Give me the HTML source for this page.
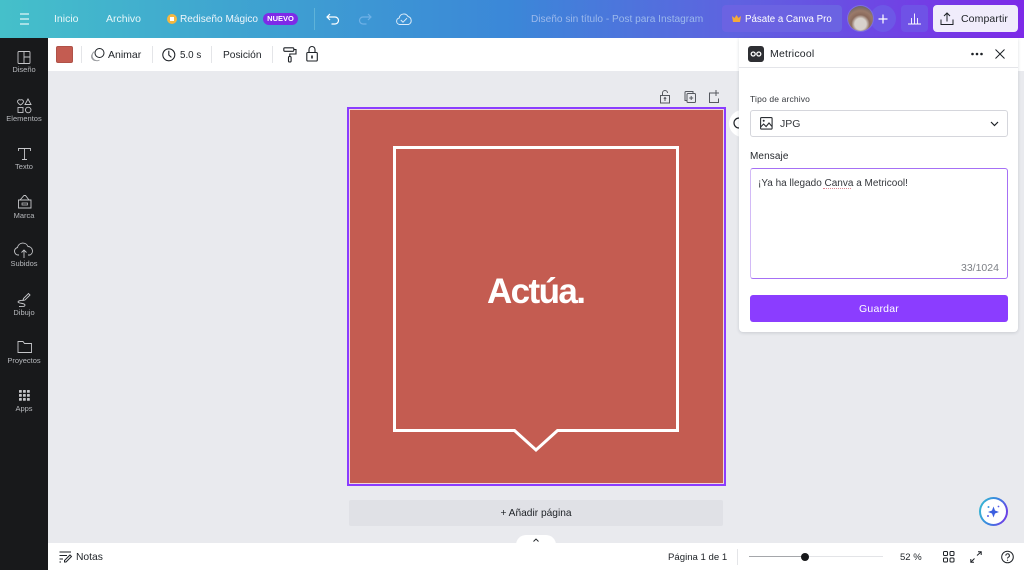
<!DOCTYPE html>
<html lang="es"><head><meta charset="utf-8"><title>Canva</title>
<style>
html,body{margin:0;padding:0}
body{position:relative;width:1024px;height:570px;overflow:hidden;background:#e9eaee;font-family:"Liberation Sans",sans-serif;color:#1d2126}
.a{position:absolute}
.t{position:absolute;white-space:nowrap;line-height:14px}
svg{position:absolute;overflow:visible;fill:none}
.sl{position:absolute;left:0;width:48px;text-align:center;font-size:7.5px;line-height:10px;color:#b6b8bc}
.sep{position:absolute;width:1px;background:#e4e5e8}
</style></head><body>

<!-- top bar -->
<div class="a" style="left:0;top:0;width:1024px;height:38px;background:linear-gradient(90deg,#45c0ca 0%,#3fa5d0 22%,#3b87d8 50%,#5f62e0 72%,#7d2ae8 100%)"></div>
<svg style="left:0;top:0" width="440" height="38" stroke="#dff5f7" stroke-width="1.2">
<path d="M20 14H29M20 19H29M20 24H29"/>
<path stroke="#fff" d="M330 14l-3 3 3 3M327 17h8a3.500 3.500 0 0 1 0 7h-3.500"/>
<path stroke="#6fb1e6" d="M368 14l3 3-3 3M371 17h-8a3.500 3.500 0 0 0 0 7h3.500"/>
<path stroke="#dcecf9" d="M399.500 24.500a3.300 3.300 0 0 1-.3-6.500 4.700 4.700 0 0 1 8.800-1.500 4.200 4.200 0 0 1 .5 8zM400.800 20l2.200 2.200 4-4" stroke-width="1"/>
</svg>
<div class="t" style="left:54px;top:12px;font-size:10.500px;color:#e6f7f9">Inicio</div>
<div class="t" style="left:106px;top:12px;font-size:10.500px;color:#e6f7f9">Archivo</div>
<div class="a" style="left:167px;top:14px;width:10px;height:10px;border-radius:50%;background:#f4b740"></div>
<div class="a" style="left:170px;top:17px;width:4px;height:4px;background:#fff"></div>
<div class="t" style="left:180px;top:13px;font-size:10.100px;color:#eef6fb">Rediseño Mágico</div>
<div class="a" style="left:263px;top:13px;width:35px;height:12px;border-radius:6px;background:#7d2ae8;color:#fff;font-size:7.500px;line-height:12px;text-align:center;font-weight:bold">NUEVO</div>
<div class="a" style="left:314px;top:8px;width:1px;height:22px;background:#5fb3d9"></div>
<div class="t" style="left:531px;top:13px;font-size:10.150px;color:#9cb9ec">Diseño sin título - Post para Instagram</div>
<div class="a" style="left:722px;top:5px;width:120px;height:27px;border-radius:4px;background:#6b63e2"></div>
<svg style="left:732px;top:15px" width="10" height="8"><path d="M0 1l2.500 2L4.500 0l2 3L9 1 8 7H1z" fill="#f5a93a"/></svg>
<div class="t" style="left:745px;top:13px;font-size:9.700px;color:#fff">Pásate a Canva Pro</div>
<div class="a" style="left:870px;top:5px;width:26px;height:27px;border-radius:50%;background:#6d57e6"></div>
<svg style="left:877px;top:13px" width="12" height="12" stroke="#fff" stroke-width="1.2"><path d="M6 1.500v9M1.500 6h9"/></svg>
<div class="a" style="left:848px;top:6px;width:25px;height:25px;border-radius:50%;background:radial-gradient(circle at 50% 72%,#d8d2cc 0 26%,#8a6a5c 42%,#9a7a6a 60%,#4d5662 100%);box-shadow:0 0 0 1px #7d6fe0"></div>
<div class="a" style="left:901px;top:5px;width:27px;height:27px;border-radius:4px;background:#6f52e6"></div>
<svg style="left:907px;top:12px" width="15" height="13" stroke="#fff" stroke-width=".9"><path d="M1 12H14M4.500 12V6M7.500 12V1.500M10.500 12V6"/></svg>
<div class="a" style="left:933px;top:5px;width:85px;height:27px;border-radius:4px;background:#f0ecfb"></div>
<svg style="left:940px;top:12px" width="14" height="14" stroke="#1d2126" stroke-width="1"><path d="M7 1v8.500M4 4l3-3 3 3M1 7.500V12.500H13V7.500"/></svg>
<div class="t" style="left:961px;top:12px;font-size:10.500px;color:#1d2126;letter-spacing:.1px">Compartir</div>

<!-- toolbar -->
<div class="a" style="left:48px;top:38px;width:976px;height:33px;background:#fff"></div>
<div class="a" style="left:0;top:38px;width:48px;height:532px;background:#18191b"></div>
<div class="a" style="left:56px;top:46px;width:17px;height:17px;border-radius:2px;background:#c45c51;box-shadow:inset 0 0 0 1px rgba(0,0,0,.1)"></div>
<div class="sep" style="left:81px;top:46px;height:17px"></div>
<svg style="left:90px;top:47px" width="16" height="16" stroke="#1d2126" stroke-width="1"><circle cx="9.500" cy="6" r="4.500"/><path stroke="#9a9ca0" d="M4.500 4.500a4.500 4.500 0 0 0 5 8.500M2.500 7a4 4 0 0 0 3.500 6.500"/></svg>
<div class="t" style="left:108px;top:48px;font-size:10.500px">Animar</div>
<div class="sep" style="left:152px;top:46px;height:17px"></div>
<svg style="left:162px;top:48px" width="14" height="14" stroke="#1d2126" stroke-width="1.1"><circle cx="6.800" cy="6.800" r="6"/><path d="M6.800 2.800V7l2.600 2.400"/></svg>
<div class="t" style="left:180px;top:49px;font-size:9.800px">5.0 s</div>
<div class="sep" style="left:211px;top:46px;height:17px"></div>
<div class="t" style="left:223px;top:49px;font-size:10.200px">Posición</div>
<div class="sep" style="left:272px;top:46px;height:17px"></div>
<svg style="left:283px;top:47px" width="14" height="16" stroke="#1d2126" stroke-width="1.1"><rect x=".8" y=".8" width="10" height="3.500" rx="1"/><path d="M11 2.500h2V7H6.800v2.500"/><rect x="5.500" y="9.500" width="2.600" height="5.500" rx="1"/></svg>
<svg style="left:306px;top:46px" width="12" height="16" stroke="#1d2126" stroke-width="1.1"><rect x=".8" y="6.500" width="10.500" height="8.500" rx="1"/><path d="M3 6.500V3.500a3 3 0 0 1 6 0v3"/><rect x="5.200" y="9.500" width="1.600" height="3" fill="#1d2126" stroke="none"/></svg>

<!-- sidebar -->
<svg style="left:0;top:40px" width="48" height="390" stroke="#c5c6c9" stroke-width=".9">
<rect x="18" y="11.500" width="12" height="12" rx="1"/><path d="M24 11.500v12M24 17h6"/>
<path d="M17.500 61.500a2 2 0 0 1 3-1.500 2 2 0 0 1 3 1.500c0 1.500-3 3.500-3 3.500s-3-2-3-3.500zM28 59l3 5.500h-6z"/><rect x="18" y="67.500" width="5" height="5"/><circle cx="28.200" cy="70" r="2.800"/>
<path d="M18.500 111v-2.500h12v2.500M24.500 108.500v11M22 119.500h5"/>
<path d="M18.500 160h12.500v8H18.500zM20 160l4-4.500h1.500l3.500 4.500"/><path d="M22 163h5.500v2H22z" stroke-width=".7"/>
<path d="M19 216h-1a3.800 3.800 0 0 1-.5-7.500 5.500 5.500 0 0 1 10.500-1 4.500 4.500 0 0 1 2 8.500h-2M24 219v-8M21.500 213.500L24 211l2.500 2.500" transform="translate(0 -1)"/>
<path d="M30 255l-5 5-2 .5.500-2 5-5zM24 260c-3 .5-6 .500-6 2s7 1 7 3-3 1.500-6 1.500"/>
<path d="M18 301.500h5l1.500 2h7v9H18z"/>
<g fill="#c5c6c9" stroke="none"><rect x="19" y="350" width="2.800" height="2.800" rx=".6"/><rect x="23" y="350" width="2.800" height="2.800" rx=".6"/><rect x="27" y="350" width="2.800" height="2.800" rx=".6"/><rect x="19" y="354" width="2.800" height="2.800" rx=".6"/><rect x="23" y="354" width="2.800" height="2.800" rx=".6"/><rect x="27" y="354" width="2.800" height="2.800" rx=".6"/><rect x="19" y="358" width="2.800" height="2.800" rx=".6"/><rect x="23" y="358" width="2.800" height="2.800" rx=".6"/><rect x="27" y="358" width="2.800" height="2.800" rx=".6"/></g>
</svg>
<div class="sl" style="top:65px">Diseño</div>
<div class="sl" style="top:114px">Elementos</div>
<div class="sl" style="top:162px">Texto</div>
<div class="sl" style="top:211px">Marca</div>
<div class="sl" style="top:259px">Subidos</div>
<div class="sl" style="top:308px">Dibujo</div>
<div class="sl" style="top:356px">Proyectos</div>
<div class="sl" style="top:404px">Apps</div>

<!-- page tools -->
<svg style="left:659px;top:90px" width="62" height="14" stroke="#55585e" stroke-width="1">
<rect x="1.500" y="5.500" width="9" height="7.500"/><path d="M3.500 5.500V3a2.500 2.500 0 0 1 5 0M6 7.500v3.500M4.800 8.700L6 7.500l1.200 1.200"/>
<path d="M28 10.500h-2v-8a1 1 0 0 1 1-1h7v2"/><rect x="28" y="3.500" width="8.500" height="9" rx="1"/><path d="M32.200 6v4M30.200 8h4"/>
<path d="M55 3h-4.500v9.500h9V8.500M57 0v6M54 3h6"/>
</svg>

<!-- canvas -->
<div class="a" style="left:347px;top:107px;width:375px;height:375px;border:2px solid #8b3dff;background:#c45c51;box-shadow:inset 0 0 0 1px #f1d8d5"></div>
<svg style="left:0;top:0" width="1024" height="570"><path d="M394.500 147.500H677.500V430.500H557.500L536 450L514.500 430.500H394.500Z" stroke="#fff" stroke-width="3"/></svg>
<div class="t" style="left:487px;top:272px;width:110px;line-height:40px;font-size:35px;font-weight:bold;color:#fff;letter-spacing:-1.600px">Actúa.</div>

<div class="a" style="left:729px;top:110px;width:30px;height:27px;border-radius:14px;background:#fff"></div>
<svg style="left:733px;top:117px" width="8" height="13" stroke="#1d2126" stroke-width="1.2"><path d="M6 1a5 5 0 0 0 0 10"/></svg>

<div class="a" style="left:349px;top:500px;width:374px;height:26px;border-radius:2px;background:#e0e1e6"></div>
<div class="t" style="left:349px;top:507px;width:374px;text-align:center;font-size:10.200px;color:#1d2126">+ Añadir página</div>

<!-- panel -->
<div class="a" style="left:739px;top:38px;width:279px;height:294px;background:#fff;border-radius:0 0 4px 4px;box-shadow:0 1px 3px rgba(40,50,70,.16)"></div>
<div class="a" style="left:739px;top:67px;width:279px;height:1px;background:#e4e5e9"></div>
<div class="a" style="left:748px;top:46px;width:16px;height:16px;border-radius:3px;background:#2e2f33"></div>
<svg style="left:750px;top:51px" width="13" height="7" stroke="#fff" stroke-width="1.300"><circle cx="3.200" cy="3" r="2"/><circle cx="8.800" cy="3" r="2"/></svg>
<div class="t" style="left:770px;top:47px;font-size:10.500px;color:#1d2126;letter-spacing:.2px">Metricool</div>
<svg style="left:970px;top:47px" width="37" height="14"><circle cx="2.500" cy="7" r="1.300" fill="#1d2126"/><circle cx="7" cy="7" r="1.300" fill="#1d2126"/><circle cx="11.500" cy="7" r="1.300" fill="#1d2126"/><path d="M25.500 2.500l9 9M34.500 2.500l-9 9" stroke="#1d2126" stroke-width="1"/></svg>
<div class="t" style="left:750px;top:92px;font-size:8.500px;color:#34373c;letter-spacing:.15px">Tipo de archivo</div>
<div class="a" style="left:750px;top:110px;width:256px;height:25px;border:1px solid #d5d6dc;border-radius:3px"></div>
<svg style="left:760px;top:117px" width="13" height="14" stroke="#2b2e33" stroke-width="1.1"><rect x=".6" y=".6" width="11.500" height="11.500" rx="1"/><circle cx="3.700" cy="3.700" r="1" fill="#2b2e33" stroke="none"/><path d="M.6 10l3-3 2.500 2.500L9 6l3 3.500"/></svg>
<div class="t" style="left:780px;top:117px;font-size:10.500px;color:#34373c">JPG</div>
<svg style="left:990px;top:121px" width="9" height="6" stroke="#1d2126" stroke-width="1.200"><path d="M1 1l3.500 3.500L8 1"/></svg>
<div class="t" style="left:750px;top:150px;font-size:10px;color:#26292e;letter-spacing:.1px">Mensaje</div>
<div class="a" style="left:750px;top:168px;width:256px;height:109px;border:1px solid #a670f5;border-left-color:#d2baf6;border-radius:3px"></div>
<div class="t" style="left:758px;top:177px;font-size:10px;color:#34373c">¡Ya ha llegado Canva a Metricool!</div>
<div class="a" style="left:823px;top:188px;width:28px;height:0;border-top:1px dotted #e0858f"></div>
<div class="t" style="left:961px;top:261px;font-size:10.500px;color:#7d8086">33/1024</div>
<div class="a" style="left:750px;top:295px;width:258px;height:27px;border-radius:3px;background:#8b3dff;color:#fff;font-size:10.500px;line-height:28px;text-align:center;letter-spacing:.2px">Guardar</div>

<!-- assistant -->
<div class="a" style="left:979px;top:497px;width:25px;height:25px;border-radius:50%;background:#fff;border:2px solid transparent;background-image:linear-gradient(#fff,#fff),linear-gradient(110deg,#35c3d0,#3b82e0,#7d2ae8);background-origin:border-box;background-clip:padding-box,border-box"></div>
<svg style="left:985px;top:504px" width="17" height="17"><path d="M8.500 2.500L10 6.500 14 8l-4 1.500-1.500 4-1.500-4L3 8l4-1.500z" fill="#3b5fe0"/><circle cx="3.500" cy="3" r="1" fill="#3b9be0"/><circle cx="13.500" cy="2.500" r=".9" fill="#5b5fe6"/><circle cx="3" cy="12" r="1" fill="#5b5fe6"/></svg>

<!-- bottom bar -->
<div class="a" style="left:48px;top:543px;width:976px;height:27px;background:#fff"></div>
<div class="a" style="left:516px;top:535px;width:40px;height:10px;border-radius:10px 10px 0 0;background:#fff"></div>
<svg style="left:533px;top:538px" width="6" height="4" stroke="#1d2126" stroke-width=".9"><path d="M.5 3.500L3 1l2.500 2.500"/></svg>
<svg style="left:59px;top:551px" width="13" height="12" stroke="#1d2126" stroke-width="1"><path d="M.5 1H12M.5 4.500H8M.5 8H4M.5 11H2"/><path d="M11 4l1.500 1.500L7 11H5.500V9.500z"/></svg>
<div class="t" style="left:76px;top:551px;font-size:10.300px">Notas</div>
<div class="t" style="left:668px;top:551px;font-size:9.600px">Página 1 de 1</div>
<div class="sep" style="left:737px;top:549px;height:16px"></div>
<div class="a" style="left:749px;top:556px;width:56px;height:1px;background:#a5a7ab"></div>
<div class="a" style="left:805px;top:556px;width:78px;height:1px;background:#e3e4e7"></div>
<div class="a" style="left:801px;top:553px;width:8px;height:8px;border-radius:50%;background:#17181a"></div>
<div class="t" style="left:900px;top:551px;font-size:9.500px">52 %</div>
<svg style="left:943px;top:551px" width="12" height="12" stroke="#1d2126" stroke-width="1"><rect x=".5" y=".5" width="4" height="4" rx="1"/><rect x="7" y=".5" width="4" height="4" rx="1"/><rect x=".5" y="7" width="4" height="4" rx="1"/><rect x="7" y="7" width="4" height="4" rx="1"/></svg>
<svg style="left:970px;top:551px" width="12" height="12" stroke="#1d2126" stroke-width="1"><path d="M7 4.500L11 1M8 .8h3.200V4M4.500 7.500L1 11M.8 8v3.200H4"/></svg>
<svg style="left:1001px;top:551px" width="14" height="14" stroke="#1d2126" stroke-width="1"><circle cx="6.500" cy="6" r="5.800"/><path d="M4.800 4.600a1.800 1.800 0 1 1 2.600 1.600c-.6.300-.9.700-.9 1.300"/><circle cx="6.500" cy="9.200" r=".6" fill="#1d2126" stroke="none"/></svg>

</body></html>
